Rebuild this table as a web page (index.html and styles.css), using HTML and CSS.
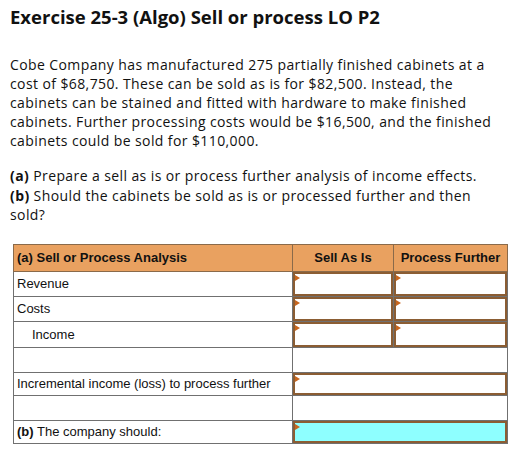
FILE: index.html
```html
<!DOCTYPE html>
<html lang="en">
<head>
  <meta charset="UTF-8">
  <title>Exercise 25-3 (Algo) Sell or process LO P2</title>
  <link rel="stylesheet" href="styles.css">
</head>
<body>
  <div class="page">
    <h1 class="title">Exercise 25-3 (Algo) Sell or process LO P2</h1>
    <p class="text">Cobe Company has manufactured 275 partially finished cabinets at a cost of $68,750. These can be sold as is for $82,500. Instead, the cabinets can be stained and fitted with hardware to make finished cabinets. Further processing costs would be $16,500, and the finished cabinets could be sold for $110,000.</p>
    <p class="text"><b>(a)</b> Prepare a sell as is or process further analysis of income effects.<br><b>(b)</b> Should the cabinets be sold as is or processed further and then sold?</p>

    <table class="sheet">
      <colgroup>
        <col class="c1">
        <col class="c2">
        <col class="c3">
      </colgroup>
      <tr class="head">
        <td class="label"><b>(a) Sell or Process Analysis</b></td>
        <td class="colhead">Sell As Is</td>
        <td class="colhead">Process Further</td>
      </tr>
      <tr>
        <td class="label">Revenue</td>
        <td class="cell"><div class="input"><span class="flag"></span></div></td>
        <td class="cell"><div class="input"><span class="flag"></span></div></td>
      </tr>
      <tr>
        <td class="label">Costs</td>
        <td class="cell"><div class="input"><span class="flag"></span></div></td>
        <td class="cell"><div class="input"><span class="flag"></span></div></td>
      </tr>
      <tr class="tall">
        <td class="label indent">Income</td>
        <td class="cell"><div class="input"><span class="flag"></span></div></td>
        <td class="cell"><div class="input"><span class="flag"></span></div></td>
      </tr>
      <tr class="blank">
        <td class="label"></td>
        <td colspan="2" class="empty"></td>
      </tr>
      <tr class="short">
        <td class="label">Incremental income (loss) to process further</td>
        <td colspan="2" class="cell"><div class="input"><span class="flag"></span></div></td>
      </tr>
      <tr class="blank">
        <td class="label"></td>
        <td colspan="2" class="empty"></td>
      </tr>
      <tr class="short">
        <td class="label"><b>(b)</b> The company should:</td>
        <td colspan="2" class="cell"><div class="input cyan"><span class="flag"></span></div></td>
      </tr>
    </table>
  </div>
</body>
</html>
```

FILE: styles.css
```css
body {
  margin: 0;
  background: #ffffff;
  color: #111111;
}

.page {
  padding: 5px 10px 0 10px;
}

.title {
  font-family: "Open Sans", Lato, sans-serif;
  font-size: 18.5px;
  line-height: 24px;
  font-weight: 700;
  margin: 0 0 26px 0;
}

.text {
  max-width: 492px;
  font-family: "Open Sans", Lato, sans-serif;
  font-size: 14px;
  letter-spacing: 0.4px;
  line-height: 19.1px;
  margin: 0 0 16px 0;
}

.sheet {
  margin: 20px 0 0 3px;
  width: 494px;
  table-layout: fixed;
  border-collapse: collapse;
  font-family: "Liberation Sans", Arial, sans-serif;
  font-size: 13px;
}

.c1 {
  width: 279px;
}

.c2 {
  width: 101px;
}

.c3 {
  width: 114px;
}

.sheet td {
  border: 1px solid #707070;
  height: 24px;
  padding: 0;
  white-space: nowrap;
}

.sheet .label {
  padding-left: 3px;
}

.sheet .indent {
  padding-left: 18px;
}

.head td {
  background: #e9a160;
  border-color: #8a6a4a;
  height: 26px;
}

.colhead {
  font-weight: 700;
  text-align: center;
}

.input {
  position: relative;
  box-sizing: border-box;
  height: 24px;
  border: 2px solid #8b5d33;
  background: #ffffff;
}

.tall td {
  height: 25px;
}

.tall .input {
  height: 25px;
}

.input.cyan {
  background: #8effff;
}

.flag {
  position: absolute;
  left: 0;
  top: 1px;
  width: 0;
  height: 0;
  border-top: 3px solid transparent;
  border-bottom: 3px solid transparent;
  border-left: 5px solid #c8661e;
}

.blank td {
  height: 24px;
}

.short td {
  height: 22px;
}

.short .input {
  height: 22px;
}

.sheet .empty {
  border-left-color: transparent;
}
```
